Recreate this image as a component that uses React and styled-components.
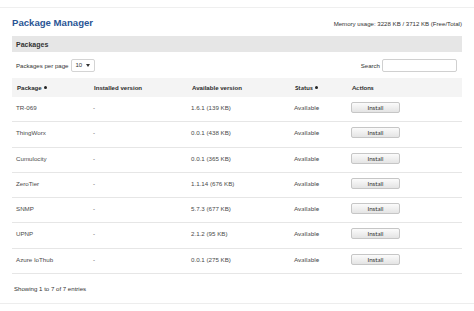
import styled, { createGlobalStyle } from 'styled-components'

const GlobalStyle = createGlobalStyle`
body {
  margin: 0;
  background: #fff;
  font-family: "Liberation Sans", Arial, sans-serif;
  color: #555;
}
`

const packages = [
  { name: 'TR-069', version: '1.6.1 (139 KB)' },
  { name: 'ThingWorx', version: '0.0.1 (438 KB)' },
  { name: 'Cumulocity', version: '0.0.1 (365 KB)' },
  { name: 'ZeroTier', version: '1.1.14 (676 KB)' },
  { name: 'SNMP', version: '5.7.3 (677 KB)' },
  { name: 'UPNP', version: '2.1.2 (95 KB)' },
  { name: 'Azure IoThub', version: '0.0.1 (275 KB)' },
]

function App() {
  return (
    <>
      <GlobalStyle />
      <TopStrip />
      <Page>
        <Inner>
          <Header>
            <Title>Package Manager</Title>
            <Memory>Memory usage: 3228 KB / 3712 KB (Free/Total)</Memory>
          </Header>
          <PanelBar>Packages</PanelBar>
          <Controls>
            <Label>
              Packages per page
              <Select>
                <span>10</span>
                <Caret />
              </Select>
            </Label>
            <Label>
              Search
              <SearchInput />
            </Label>
          </Controls>
          <Table>
            <HeadRow>
              <HeadCell>Package <SortDot /></HeadCell>
              <HeadCell>Installed version</HeadCell>
              <HeadCell>Available version</HeadCell>
              <HeadCell $alt>Status <SortDot /></HeadCell>
              <HeadCell $alt>Actions</HeadCell>
            </HeadRow>
            {packages.map(p => (
              <Row key={p.name}>
                <Cell>{p.name}</Cell>
                <Cell>-</Cell>
                <Cell>{p.version}</Cell>
                <Cell $alt>Available</Cell>
                <Cell><InstallButton>Install</InstallButton></Cell>
              </Row>
            ))}
          </Table>
          <Footer>Showing 1 to 7 of 7 entries</Footer>
        </Inner>
      </Page>
    </>
  )
}

export default App

const TopStrip = styled.div`
height: 7px;
border-bottom: 1px solid #efefef;
`

const Page = styled.div`
border-bottom: 1px solid #ededed;
`

const Inner = styled.div`
padding: 0 12px;
`

const Header = styled.div`
height: 28px;
padding-top: 1px;
box-sizing: border-box;
display: flex;
justify-content: space-between;
align-items: center;
`

const Title = styled.h1`
margin: 0;
font-size: 9.6px;
font-weight: bold;
color: #2a5595;
`

const Memory = styled.div`
font-size: 6.1px;
color: #333;
padding-top: 2px;
`

const PanelBar = styled.div`
height: 16px;
background: #e6e6e6;
padding-left: 4px;
display: flex;
align-items: center;
font-size: 7px;
font-weight: bold;
color: #333;
`

const Controls = styled.div`
height: 26px;
display: flex;
justify-content: space-between;
align-items: center;
padding: 0 5px 0 4px;
`

const Label = styled.label`
display: flex;
align-items: center;
gap: 2px;
font-size: 6.1px;
color: #333;
`

const Select = styled.div`
width: 24px;
height: 13px;
box-sizing: border-box;
border: 1px solid #d4d4d4;
border-radius: 2px;
display: flex;
align-items: center;
justify-content: space-between;
padding: 0 4px;
font-size: 6px;
color: #333;
`

const Caret = styled.span`
width: 0;
height: 0;
border-left: 2px solid transparent;
border-right: 2px solid transparent;
border-top: 3px solid #333;
`

const SearchInput = styled.div`
width: 75px;
height: 13px;
box-sizing: border-box;
border: 1px solid #d0d0d0;
border-radius: 2px;
background: #fff;
`

const Table = styled.div`
display: flex;
flex-direction: column;
`

const grid = `
display: grid;
grid-template-columns: 77px 98px 103px 57px 1fr;
padding-left: 5px;
`

const HeadRow = styled.div`
${grid}
height: 19px;
align-items: center;
background: #f4f4f4;
`

const HeadCell = styled.div`
font-size: ${p => (p.$alt ? '6.4px' : '6.1px')};
font-family: ${p => (p.$alt ? 'Lato, "Liberation Sans", sans-serif' : 'inherit')};
font-weight: bold;
color: #2b2b2b;
display: flex;
align-items: center;
gap: 2px;
`

const SortDot = styled.span`
width: 3px;
height: 3px;
border-radius: 50%;
background: #222;
`

const Row = styled.div`
${grid}
height: 25.3px;
box-sizing: border-box;
padding-top: 5px;
align-items: start;
border-bottom: 1px solid #e6e6e6;
padding-left: 4px;
`

const Cell = styled.div`
height: 11px;
display: flex;
align-items: center;
font-size: ${p => (p.$alt ? '6.4px' : '6.2px')};
font-family: ${p => (p.$alt ? 'Lato, "Liberation Sans", sans-serif' : 'inherit')};
color: #4a4a4a;
`

const InstallButton = styled.div`
width: 49px;
height: 11px;
box-sizing: border-box;
border: 1px solid #c6c6c6;
border-radius: 2px;
background: linear-gradient(#fbfbfb, #e4e4e4);
display: flex;
align-items: center;
justify-content: center;
font-family: Lato, "Liberation Sans", sans-serif;
font-size: 6.2px;
color: #333;
`

const Footer = styled.div`
height: 29px;
display: flex;
align-items: center;
padding-left: 2px;
font-size: 6.1px;
color: #333;
`
